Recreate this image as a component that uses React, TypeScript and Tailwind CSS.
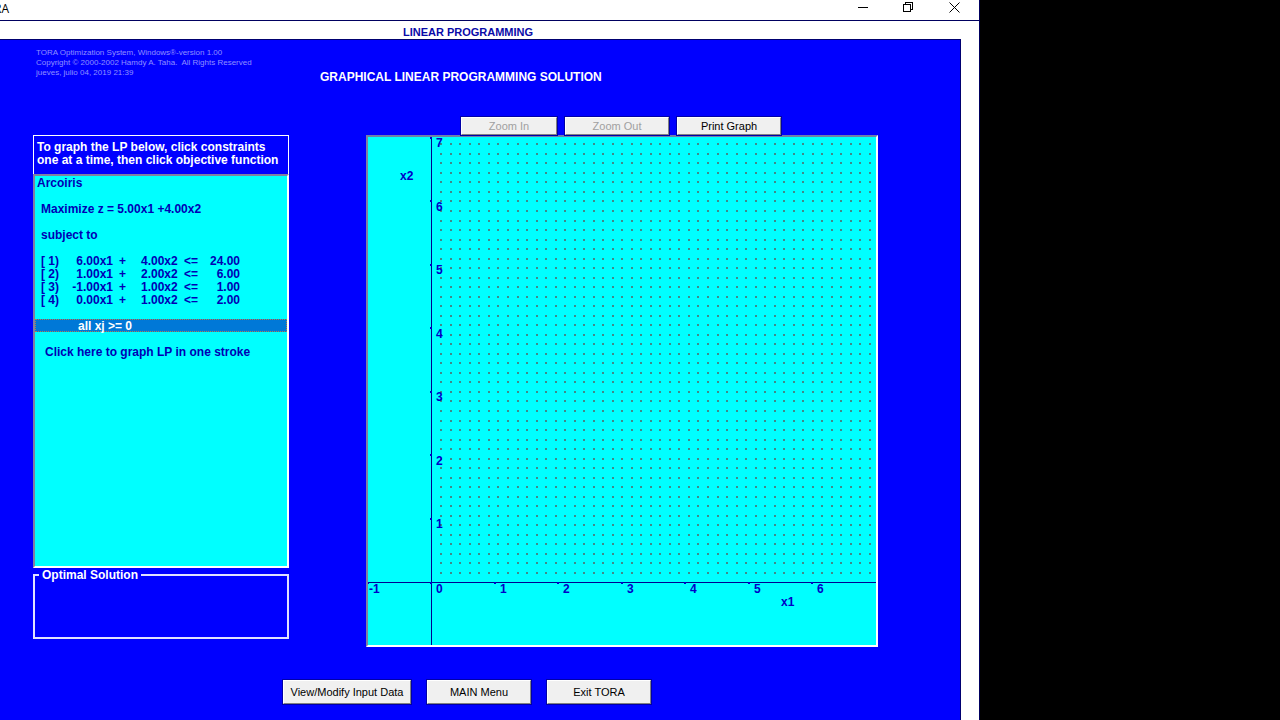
import React, { useState } from "react";

const UNIT = 63.5;
const DOT_STEP = 9.525;
const DOTS = Array.from({ length: 46 }, (_, i) => i);

const CONSTRAINTS = [
  { n: "1", a: "6.00x1", b: "4.00x2", rhs: "24.00" },
  { n: "2", a: "1.00x1", b: "2.00x2", rhs: "6.00" },
  { n: "3", a: "-1.00x1", b: "1.00x2", rhs: "1.00" },
  { n: "4", a: "0.00x1", b: "1.00x2", rhs: "2.00" },
];

type ButtonProps = { children: React.ReactNode; className: string; disabled?: boolean };

function PushButton({ children, className, disabled }: ButtonProps) {
  return (
    <button
      type="button"
      disabled={disabled}
      className={`border border-t-white border-l-white border-r-[#808080] border-b-[#808080] bg-[#f0f0f0] text-[11px] leading-4 whitespace-nowrap text-black shadow-[0_0_0_1px_#0000a8] disabled:text-[#a0a0a0] ${className}`}
    >
      {children}
    </button>
  );
}

function Graph() {
  return (
    <svg
      viewBox="0 0 508 508"
      className="block h-auto w-full text-[12px] font-bold"
      role="img"
      aria-label="Solution space"
      shapeRendering="crispEdges"
    >
      <rect width="508" height="508" fill="#00ffff" />
      {DOTS.map((r) =>
        DOTS.map((c) => (
          <rect
            key={`${r}-${c}`}
            x={Math.round(72.3 + c * DOT_STEP)}
            y={Math.round(6.3 + r * DOT_STEP)}
            width="2"
            height="2"
            fill="#408a8a"
          />
        ))
      )}
      <rect x="63" y="0" width="1" height="508" fill="#000090" />
      <rect x="0" y="445" width="508" height="1" fill="#000090" />
      <g fill="#0000c8">
        {[1, 2, 3, 4, 5, 6, 7].map((v) => (
          <g key={v}>
            <rect x="62" y={Math.round(444 - v * UNIT)} width="2" height="2" />
            <text x="68" y={Math.floor(455 - v * UNIT)}>
              {v}
            </text>
          </g>
        ))}
        {[-1, 0, 1, 2, 3, 4, 5, 6].map((v) => (
          <g key={v}>
            <rect x={Math.round(62 + v * UNIT)} y="445" width="2" height="2" />
            <text x={v < 0 ? 1 : Math.round(68 + v * UNIT)} y="456">
              {v}
            </text>
          </g>
        ))}
        <text x="32" y="43">x2</text>
        <text x="413" y="469">x1</text>
      </g>
    </svg>
  );
}

function ListRow({ selected, onClick, children }: { selected: boolean; onClick: () => void; children: React.ReactNode }) {
  return (
    <li>
      <button
        type="button"
        onClick={onClick}
        className={
          selected
            ? "flex h-[13px] w-full items-center border border-dotted border-[#b08050] bg-[#0078d7] text-left text-white"
            : "flex h-[13px] w-full items-center border border-transparent text-left"
        }
      >
        {children}
      </button>
    </li>
  );
}

export default function App() {
  const [selected, setSelected] = useState("bounds");
  return (
    <div className="flex min-h-screen bg-black font-['Liberation_Sans',Arial,sans-serif]">
      <div className="flex grow flex-col border-r border-[#000060] bg-white">
        <header className="flex h-5 items-start justify-between overflow-hidden">
          <div className="-ml-1.5 font-['Open_Sans','Noto_Sans',sans-serif] text-[12px] leading-[18px] text-black">RA</div>
          <div className="flex h-[15px] items-center gap-[22px] pr-[13px]">
            <button type="button" aria-label="Minimize" className="flex w-6 justify-center">
              <svg width="11" height="11" viewBox="0 0 11 11" shapeRendering="crispEdges">
                <path d="M0.5 5.5H10.5" stroke="#000" />
              </svg>
            </button>
            <button type="button" aria-label="Restore" className="flex w-6 justify-center">
              <svg width="11" height="11" viewBox="0 0 11 11" fill="none" stroke="#000" shapeRendering="crispEdges">
                <path d="M0.5 2.5H7.5V9.5H0.5ZM2.5 2.5V0.5H9.5V7.5H7.5" />
              </svg>
            </button>
            <button type="button" aria-label="Close" className="flex w-6 justify-center">
              <svg width="11" height="11" viewBox="0 0 11 11" stroke="#000">
                <path d="M0.5 0.5L10.5 10.5M10.5 0.5L0.5 10.5" />
              </svg>
            </button>
          </div>
        </header>

        <div className="flex grow flex-col border-t border-[#000060]">
          <div className="flex h-[18px] items-center justify-center pt-1 pr-[43px] text-[11px] leading-4 font-bold text-[#0a0aa8]">
            LINEAR PROGRAMMING
          </div>

          <main className="mr-[18px] flex grow flex-col border-t border-r border-[#000070] bg-[#0000ff] pl-[33px]">
            <div className="flex h-[77px] pt-[7px]">
              <p className="w-[287px] pt-px pl-[3px] text-[8px] leading-[10px] whitespace-pre text-[#9090ff]">
                {"TORA Optimization System, Windows®-version 1.00\nCopyright © 2000-2002 Hamdy A. Taha.  All Rights Reserved\njueves, julio 04, 2019 21:39"}
              </p>
              <h1 className="pt-[22px] text-[12px] leading-4 font-bold whitespace-nowrap text-white">
                GRAPHICAL LINEAR PROGRAMMING SOLUTION
              </h1>
            </div>

            <div className="flex gap-[77px]">
              <section className="flex w-64 flex-col pt-[18px] text-[12px] leading-[13px] font-bold">
                <p className="h-[39px] border border-b-0 border-white pt-[5px] pl-[3px] whitespace-pre text-white">
                  {"To graph the LP below, click constraints\none at a time, then click objective function"}
                </p>
                <ul className="h-[394px] border-2 border-t-[#8080a0] border-r-white border-b-white border-l-[#8080a0] bg-[#00ffff] text-[#0000b4]">
                  <li className="h-[13px] pt-px pl-[2px]">Arcoiris</li>
                  <li className="mt-[13px]">
                    <button type="button" className="block h-[13px] pt-px pl-[6px]">Maximize z = 5.00x1 +4.00x2</button>
                  </li>
                  <li className="mt-[13px] mb-[13px] h-[13px] pt-px pl-[6px]">subject to</li>
                  {CONSTRAINTS.map((c) => (
                    <ListRow key={c.n} selected={selected === c.n} onClick={() => setSelected(c.n)}>
                      <span className="w-[23px] pt-px pl-[5px] whitespace-nowrap">[ {c.n})</span>
                      <span className="w-[54px] pt-px text-right">{c.a}</span>
                      <span className="w-[28px] pt-px pl-[6px]">+</span>
                      <span className="w-[43px] pt-px">{c.b}</span>
                      <span className="w-5 pt-px">&lt;=</span>
                      <span className="w-9 pt-px text-right">{c.rhs}</span>
                    </ListRow>
                  ))}
                  <li className="h-[13px]" />
                  <ListRow selected={selected === "bounds"} onClick={() => setSelected("bounds")}>
                    <span className="pt-px pl-[42px]">all xj &gt;= 0</span>
                  </ListRow>
                  <li className="h-[13px]" />
                  <ListRow selected={selected === "all"} onClick={() => setSelected("all")}>
                    <span className="pt-px pl-[9px]">Click here to graph LP in one stroke</span>
                  </ListRow>
                </ul>
                <fieldset className="h-[71px] border-2 border-[#e0e0ff] px-1">
                  <legend className="px-[3px] leading-[14px] text-white">Optimal Solution</legend>
                </fieldset>
              </section>

              <section>
                <div className="flex h-[18px] gap-2 pl-[95px]">
                  <PushButton disabled className="w-24">Zoom In</PushButton>
                  <PushButton disabled className="w-26">Zoom Out</PushButton>
                  <PushButton className="w-26">Print Graph</PushButton>
                </div>
                <div className="w-[512px] border-2 border-t-[#7080a8] border-r-white border-b-white border-l-[#8080a0]">
                  <Graph />
                </div>
              </section>
            </div>

            <footer className="flex gap-4 pt-[33px] pl-[250px]">
              <PushButton className="h-6 w-32">View/Modify Input Data</PushButton>
              <PushButton className="h-6 w-26">MAIN Menu</PushButton>
              <PushButton className="h-6 w-26">Exit TORA</PushButton>
            </footer>
          </main>
        </div>
      </div>
      <div className="w-[300px] shrink-0" />
    </div>
  );
}
